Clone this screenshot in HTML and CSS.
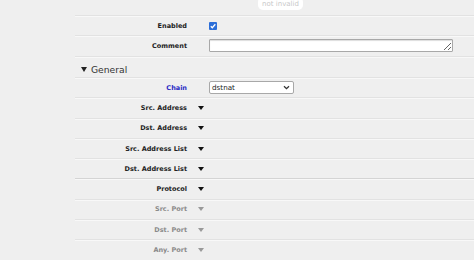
FILE: index.html
```html
<!DOCTYPE html>
<html>
<head>
<meta charset="utf-8">
<link rel="stylesheet" href="styles.css">
</head>
<body>
<div class="page">
  <div class="row top">
    <div class="label"></div><div class="arr"></div>
    <div class="value"><span class="pill">not invalid</span></div>
  </div>
  <div class="row">
    <div class="label">Enabled</div><div class="arr"></div>
    <div class="value"><span class="check"><svg width="8" height="8" viewBox="0 0 8 8"><path d="M1.8 4.2 L3.3 5.7 L6.3 2.3" fill="none" stroke="#fff" stroke-width="1.3"/></svg></span></div>
  </div>
  <div class="row">
    <div class="label">Comment</div><div class="arr"></div>
    <div class="value"><textarea class="comment"></textarea></div>
  </div>
  <div class="section"><span class="tri"></span><span class="sec-title">General</span></div>
  <div class="row">
    <div class="label chain">Chain</div><div class="arr"></div>
    <div class="value"><div class="select"><span>dstnat</span><svg width="7" height="5" viewBox="0 0 7 5"><path d="M1 1.2 L3.5 3.7 L6 1.2" fill="none" stroke="#333" stroke-width="1.3"/></svg></div></div>
  </div>
  <div class="row">
    <div class="label">Src. Address</div><div class="arr"><span class="tri"></span></div><div class="value"></div>
  </div>
  <div class="row">
    <div class="label">Dst. Address</div><div class="arr"><span class="tri"></span></div><div class="value"></div>
  </div>
  <div class="row">
    <div class="label">Src. Address List</div><div class="arr"><span class="tri"></span></div><div class="value"></div>
  </div>
  <div class="row dark">
    <div class="label">Dst. Address List</div><div class="arr"><span class="tri"></span></div><div class="value"></div>
  </div>
  <div class="row">
    <div class="label">Protocol</div><div class="arr"><span class="tri"></span></div><div class="value"></div>
  </div>
  <div class="row off">
    <div class="label">Src. Port</div><div class="arr"><span class="tri"></span></div><div class="value"></div>
  </div>
  <div class="row off">
    <div class="label">Dst. Port</div><div class="arr"><span class="tri"></span></div><div class="value"></div>
  </div>
  <div class="row off">
    <div class="label">Any. Port</div><div class="arr"><span class="tri"></span></div><div class="value"></div>
  </div>
</div>
</body>
</html>
```

FILE: styles.css
```css
html, body {
  margin: 0;
  padding: 0;
  background: #efefef;
  font-family: "DejaVu Sans", Verdana, sans-serif;
  overflow: hidden;
}
.page {
  width: 474px;
  height: 260px;
  overflow: hidden;
}
.row {
  margin-left: 75px;
  height: 19.3px;
  display: grid;
  grid-template-columns: 112px 22px 1fr;
  align-items: center;
  border-bottom: 1px solid #e2e2e2;
  box-shadow: 0 1px 0 #f8f8f8;
}
.row.top {
  height: 15px;
  align-items: start;
}
.row.dark {
  border-bottom-color: #d4d4d4;
}
.label {
  text-align: right;
  font-size: 6.5px;
  font-weight: bold;
  color: #222;
  white-space: nowrap;
}
.label.chain {
  color: #2b2bc4;
}
.row.off .label {
  color: #8a8a8a;
}
.arr {
  display: flex;
  align-items: center;
  padding-left: 11px;
}
.tri {
  display: inline-block;
  width: 0;
  height: 0;
  border-left: 3px solid transparent;
  border-right: 3px solid transparent;
  border-top: 4px solid #111;
}
.row.off .tri {
  border-top-color: #999;
}
.value {
  display: flex;
  align-items: center;
}
.pill {
  margin-left: 49px;
  margin-top: -3px;
  display: inline-block;
  width: 45px;
  height: 13px;
  line-height: 15px;
  text-align: center;
  background: #fff;
  border-radius: 5px;
  color: #c9c9c9;
  font-size: 7px;
}
.check {
  width: 8px;
  height: 8px;
  background: #2c6ed8;
  border-radius: 1px;
  display: flex;
}
.comment {
  width: 244px;
  height: 13px;
  box-sizing: border-box;
  margin: 0;
  padding: 0;
  border: 1px solid #a8a8a8;
  border-radius: 1px;
  background: #fff;
  box-shadow: inset 0 1px 1px #ddd;
  display: block;
  resize: both;
}
.section {
  margin-left: 75px;
  height: 20.4px;
  box-sizing: content-box;
  display: flex;
  align-items: flex-end;
  padding-bottom: 0;
  border-bottom: 1px solid #e2e2e2;
  box-shadow: 0 1px 0 #f8f8f8;
}
.section .tri {
  margin-left: 6px;
  margin-bottom: 5px;
  border-left-width: 3px;
  border-right-width: 3px;
  border-top-width: 5px;
  border-top-color: #222;
}
.sec-title {
  margin-left: 4px;
  margin-bottom: 2px;
  font-size: 9.2px;
  color: #333;
}
.select {
  width: 85px;
  height: 13px;
  box-sizing: border-box;
  border: 1px solid #a8a8a8;
  border-radius: 2px;
  background: #fff;
  display: flex;
  align-items: center;
  justify-content: space-between;
  padding: 0 3px 0 2px;
  font-size: 7.2px;
  color: #222;
}
```
